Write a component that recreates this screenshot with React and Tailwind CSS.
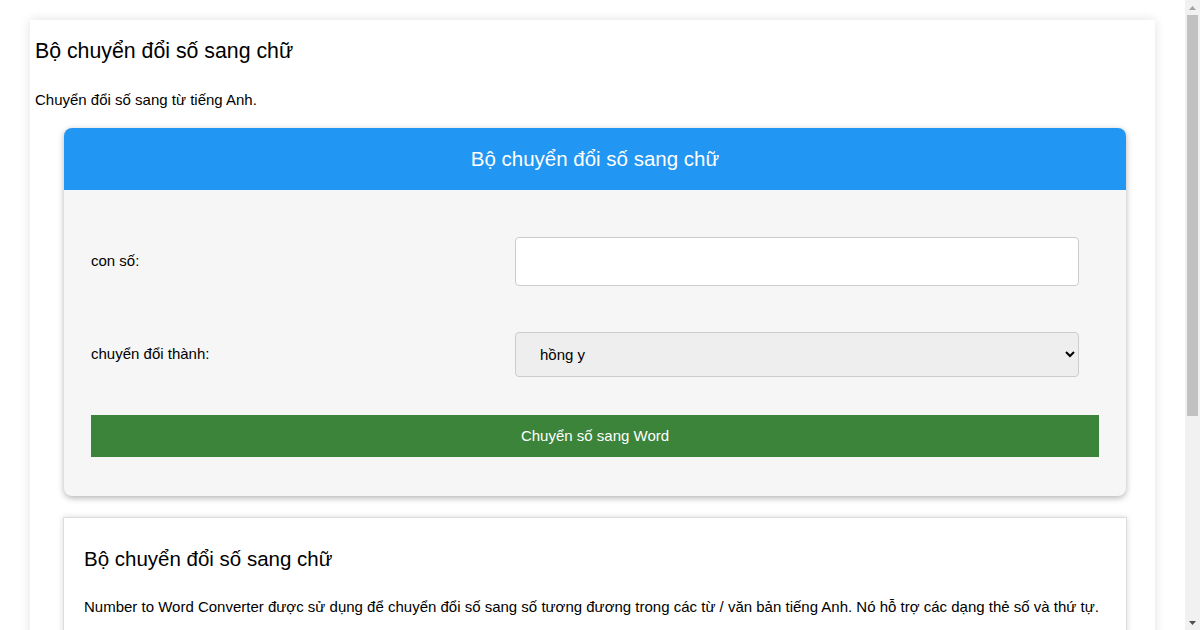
import React from "react";

function Scrollbar() {
  return (
    <div className="relative flex h-[630px] w-[15px] shrink-0 flex-col bg-[#f1f1f1]">
      <div className="flex h-[15px] items-center justify-center">
        <svg width="7" height="4" viewBox="0 0 7 4"><polygon points="0,4 7,4 3.5,0" fill="#a3a3a3" /></svg>
      </div>
      <div className="mx-[2px] h-[401px] bg-[#c1c1c1]" />
      <div className="flex-1" />
      <div className="flex h-[15px] items-center justify-center">
        <svg width="7" height="4" viewBox="0 0 7 4"><polygon points="0,0 7,0 3.5,4" fill="#505050" /></svg>
      </div>
    </div>
  );
}

export default function App() {
  return (
    <div className="flex h-[630px] w-[1200px] overflow-hidden bg-white text-black" style={{ fontFamily: '"Liberation Sans", Arial, sans-serif' }}>
      <div className="h-[630px] w-[1185px] shrink-0 overflow-hidden pt-[20px]">
        <div className="mx-auto w-[1125px] bg-white pl-[5px] pr-[5px] pt-[16px] pb-[20px] shadow-[0_0_10px_rgba(0,0,0,0.12)]">
          <h1 className="text-[21.3px] leading-[30px] font-normal">Bộ chuyển đổi số sang chữ</h1>
          <p className="mt-[24px] text-[15px] leading-[20px]">Chuyển đổi số sang từ tiếng Anh.</p>

          <div className="mt-[18px] ml-[29px] w-[1062px] overflow-hidden rounded-[8px] bg-[#f6f6f6] shadow-[0_2px_6px_rgba(0,0,0,0.3)]">
            <div className="flex h-[62px] items-center justify-center bg-[#2196f3] text-[20.5px] text-white">
              Bộ chuyển đổi số sang chữ
            </div>
            <div className="px-[27px] pt-[47px] pb-[39px]">
              <div className="flex h-[49px] items-center">
                <label className="w-[424px] text-[15px]">con số:</label>
                <input
                  type="text"
                  className="h-[49px] w-[564px] rounded-[4px] border border-[#cccccc] bg-white px-[12px] text-[15px] outline-none"
                />
              </div>
              <div className="mt-[46px] flex h-[45px] items-center">
                <label className="w-[424px] text-[15px]">chuyển đổi thành:</label>
                <select
                  className="h-[45px] w-[564px] rounded-[4px] border border-[#cccccc] bg-[#eeeeee] pl-[20px] pr-[6px] text-[15px] text-black outline-none"
                  defaultValue="hong"
                >
                  <option value="hong">hồng y</option>
                  <option value="thu">thứ tự</option>
                </select>
              </div>
              <button className="mt-[38px] flex h-[42px] w-full items-center justify-center bg-[#3b843a] text-[15px] text-white">
                Chuyển số sang Word
              </button>
            </div>
          </div>

          <div className="mt-[21px] ml-[28px] w-[1064px] border border-[#dddddd] bg-white px-[20px] pt-[26px] pb-[30px] shadow-[0_0_6px_rgba(0,0,0,0.15)]">
            <h2 className="text-[20.5px] leading-[30px] font-normal">Bộ chuyển đổi số sang chữ</h2>
            <p className="mt-[23px] text-[15px] leading-[20px]">
              Number to Word Converter được sử dụng để chuyển đổi số sang số tương đương trong các từ / văn bản tiếng Anh. Nó hỗ trợ các dạng thẻ số và thứ tự.
            </p>
          </div>
        </div>
      </div>
      <Scrollbar />
    </div>
  );
}
